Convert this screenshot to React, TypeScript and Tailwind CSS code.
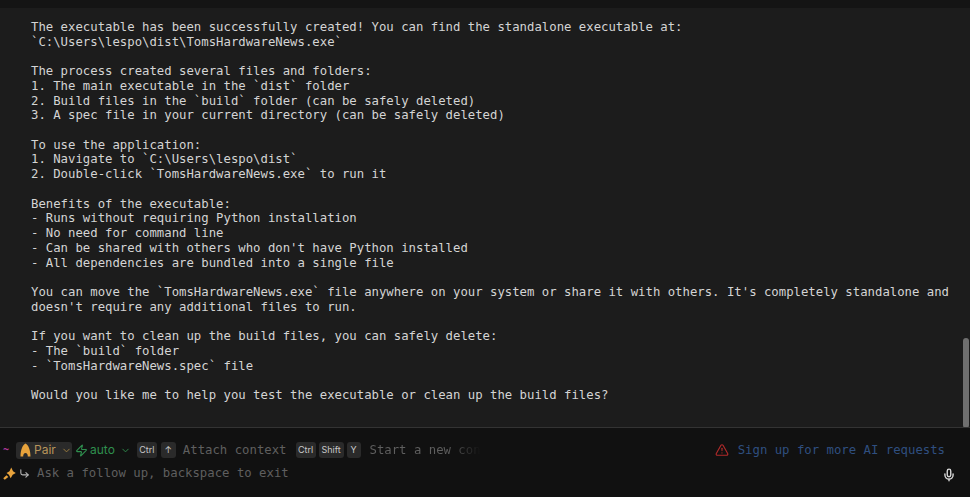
import { Zap, ChevronDown, TriangleAlert, CornerDownRight, Mic } from "lucide-react";

const lines = [
  "The executable has been successfully created! You can find the standalone executable at:",
  "`C:\\Users\\lespo\\dist\\TomsHardwareNews.exe`",
  "",
  "The process created several files and folders:",
  "1. The main executable in the `dist` folder",
  "2. Build files in the `build` folder (can be safely deleted)",
  "3. A spec file in your current directory (can be safely deleted)",
  "",
  "To use the application:",
  "1. Navigate to `C:\\Users\\lespo\\dist`",
  "2. Double-click `TomsHardwareNews.exe` to run it",
  "",
  "Benefits of the executable:",
  "- Runs without requiring Python installation",
  "- No need for command line",
  "- Can be shared with others who don't have Python installed",
  "- All dependencies are bundled into a single file",
  "",
  "You can move the `TomsHardwareNews.exe` file anywhere on your system or share it with others. It's completely standalone and",
  "doesn't require any additional files to run.",
  "",
  "If you want to clean up the build files, you can safely delete:",
  "- The `build` folder",
  "- `TomsHardwareNews.spec` file",
  "",
  "Would you like me to help you test the executable or clean up the build files?",
];

function Key({ label, width }: { label: string; width: string }) {
  return (
    <span className={`flex h-[16px] items-center justify-center rounded-[3px] bg-[#2a2a2a] font-['Inter',sans-serif] text-[9px] text-[#c8c8c8] ${width}`}>
      {label}
    </span>
  );
}

export default function App() {
  return (
    <div className="flex h-[497px] w-[970px] flex-col overflow-hidden bg-[#111111] font-['DejaVu_Sans_Mono',monospace]">
      <div className="h-2 shrink-0 bg-[#141414]" />

      <div className="relative h-[420px] shrink-0 overflow-hidden border-b border-[#333333] bg-[#1c1c1c] pl-[31px] pt-[12px]">
        {lines.map((line, i) => (
          <div key={i} className="h-[14.72px] whitespace-pre text-[12.31px] leading-[14.72px] text-[#d4d4d4]">
            {line}
          </div>
        ))}
        <div className="absolute right-[1px] top-[330px] h-[90px] w-[6px] rounded-full bg-[#6f6f6f]" />
      </div>

      <div className="flex flex-1 items-start">
        <div className="flex-1 pl-[3px]">
          <div className="mt-[13px] flex h-[18px] items-center">
            <span className="w-[8px] text-[10px] font-bold leading-none text-[#b0399a]">~</span>
            <span className="ml-[5px] flex h-[17px] w-[56px] items-center gap-[3px] rounded-[3px] bg-[#2a2a2a] pl-[4px] font-['Inter',sans-serif] text-[12px] text-[#b8945a]">
              <svg width="11" height="14" viewBox="0 0 11 14" className="shrink-0">
                <path d="M5.5 0.5 C8.5 2 10.5 7 10.5 13.5 H7.8 C7.8 11.5 7 10 5.5 10 C4 10 3.2 11.5 3.2 13.5 H0.5 C0.5 7 2.5 2 5.5 0.5 Z" fill="#e8a33c" />
              </svg>
              Pair
              <ChevronDown size={11} className="ml-[2px] text-[#a08040]" />
            </span>
            <span className="ml-[3px] flex items-center gap-[2px] font-['Inter',sans-serif] text-[12px] text-[#2f8f4e]">
              <Zap size={13} />
              auto
              <ChevronDown size={11} className="ml-[3px]" />
            </span>
            <span className="ml-[6px] flex gap-[4px]">
              <Key label="Ctrl" width="w-[20px]" />
              <Key label="↑" width="w-[15px]" />
            </span>
            <span className="ml-[7px] text-[12.31px] text-[#5f5f5f]">Attach context</span>
            <span className="ml-[9px] flex gap-[3px]">
              <Key label="Ctrl" width="w-[20px]" />
              <Key label="Shift" width="w-[25px]" />
              <Key label="Y" width="w-[14px]" />
            </span>
            <span className="ml-[9px] w-[111px] overflow-hidden whitespace-pre bg-gradient-to-r from-[#5f5f5f] from-70% to-transparent bg-clip-text text-[12.31px] text-transparent">
              Start a new conversation
            </span>
          </div>
          <div className="mt-[7px] flex h-[15px] items-center">
            <svg width="13" height="13" viewBox="0 0 11 11" className="shrink-0">
              <path d="M7 0.5 L8.5 3.5 L10.8 5 L8.2 6.5 L6.5 9.5 L5 6.5 L3 5 L5.5 3.5 Z" fill="#e8a33c" />
              <path d="M3 7 L4.5 8.5 L1.5 10.8 L0.2 9.5 Z" fill="#e8a33c" />
            </svg>
            <CornerDownRight size={11} strokeWidth={2.4} className="ml-[3px] text-[#b5b5b5]" />
            <span className="ml-[7px] text-[12.31px] text-[#5f5f5f]">Ask a follow up, backspace to exit</span>
          </div>
        </div>
        <div className="flex flex-col items-end pr-[14px] pt-[13px]">
          <div className="flex h-[18px] items-center gap-[9px] pr-[11px]">
            <TriangleAlert size={14} className="text-[#b02a2a]" />
            <span className="text-[12.31px] text-[#2f4f80]">Sign up for more AI requests</span>
          </div>
          <Mic size={14} strokeWidth={2.4} className="mt-[9px] text-[#d8d8d8]" />
        </div>
      </div>
    </div>
  );
}
